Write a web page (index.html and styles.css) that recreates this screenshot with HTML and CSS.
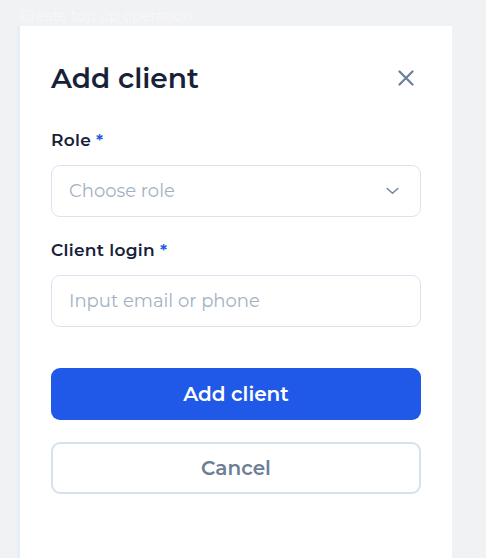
FILE: index.html
```html
<!DOCTYPE html>
<html lang="en">
<head>
<meta charset="utf-8">
<title>Add client</title>
<link rel="stylesheet" href="styles.css">
</head>
<body>
<div class="page-title">Create top up operation</div>
<div class="panel">
  <div class="panel-head">
    <h1 class="title">Add client</h1>
    <button class="close" aria-label="Close">
      <svg width="16" height="16" viewBox="0 0 16 16"><path d="M1.5 1.5 L14.5 14.5 M14.5 1.5 L1.5 14.5" stroke="#6a7f99" stroke-width="2.2" stroke-linecap="round" fill="none"/></svg>
    </button>
  </div>
  <div class="field">
    <label class="label">Role <span class="req">*</span></label>
    <div class="control select">
      <span class="placeholder">Choose role</span>
      <svg class="chev" width="13" height="8" viewBox="0 0 13 8"><path d="M1.2 1.5 L6.5 6.3 L11.8 1.5" stroke="#72859b" stroke-width="1.5" stroke-linecap="round" stroke-linejoin="round" fill="none"/></svg>
    </div>
  </div>
  <div class="field">
    <label class="label">Client login <span class="req">*</span></label>
    <div class="control">
      <span class="placeholder">Input email or phone</span>
    </div>
  </div>
  <div class="actions">
    <button class="btn primary">Add client</button>
    <button class="btn secondary">Cancel</button>
  </div>
</div>
</body>
</html>
```
FILE: styles.css
```css
* { box-sizing: border-box; }
html, body { margin: 0; padding: 0; }
body {
  background: #f1f2f4;
  font-family: "Montserrat", "Inter", "Noto Sans", sans-serif;
  height: 558px;
  overflow: hidden;
}
.page-title {
  color: #f7f8fa;
  font-size: 14.5px;
  line-height: 20px;
  padding: 6px 0 0 20px;
  height: 26px;
}
.panel {
  margin-left: 17px;
  width: 435px;
  min-height: 532px;
  background: #fff;
  border-left: 3px solid #e8eef7;
  padding: 34px 31px 0 31px;
}
.panel-head {
  display: flex;
  justify-content: space-between;
  align-items: center;
  margin-bottom: 34px;
}
.title {
  margin: 0;
  font-size: 28px;
  line-height: 36px;
  font-weight: 600;
  color: #172239;
}
.close {
  border: 0;
  background: none;
  padding: 0;
  margin-right: 7px;
  width: 16px;
  height: 16px;
  display: flex;
}
.field { margin-bottom: 23px; }
.label {
  display: block;
  font-size: 17px;
  line-height: 20px;
  font-weight: 600;
  color: #172239;
  margin-bottom: 15px;
  letter-spacing: 0.3px;
}
.req { color: #2458e6; }
.control {
  height: 52px;
  border: 1px solid #d9e4f0;
  border-radius: 9px;
  display: flex;
  align-items: center;
  justify-content: space-between;
  padding: 0 21px 0 17px;
}
.placeholder {
  font-size: 18px;
  color: #a3b2c3;
}
.actions {
  margin-top: 41px;
  display: flex;
  flex-direction: column;
  gap: 22px;
}
.btn {
  height: 52px;
  border-radius: 9px;
  font-family: inherit;
  font-size: 20px;
  font-weight: 600;
  cursor: pointer;
}
.primary {
  background: #2058e8;
  border: 0;
  color: #fff;
}
.secondary {
  background: #fff;
  border: 2px solid #d7e1ec;
  color: #6d7f95;
}
```
